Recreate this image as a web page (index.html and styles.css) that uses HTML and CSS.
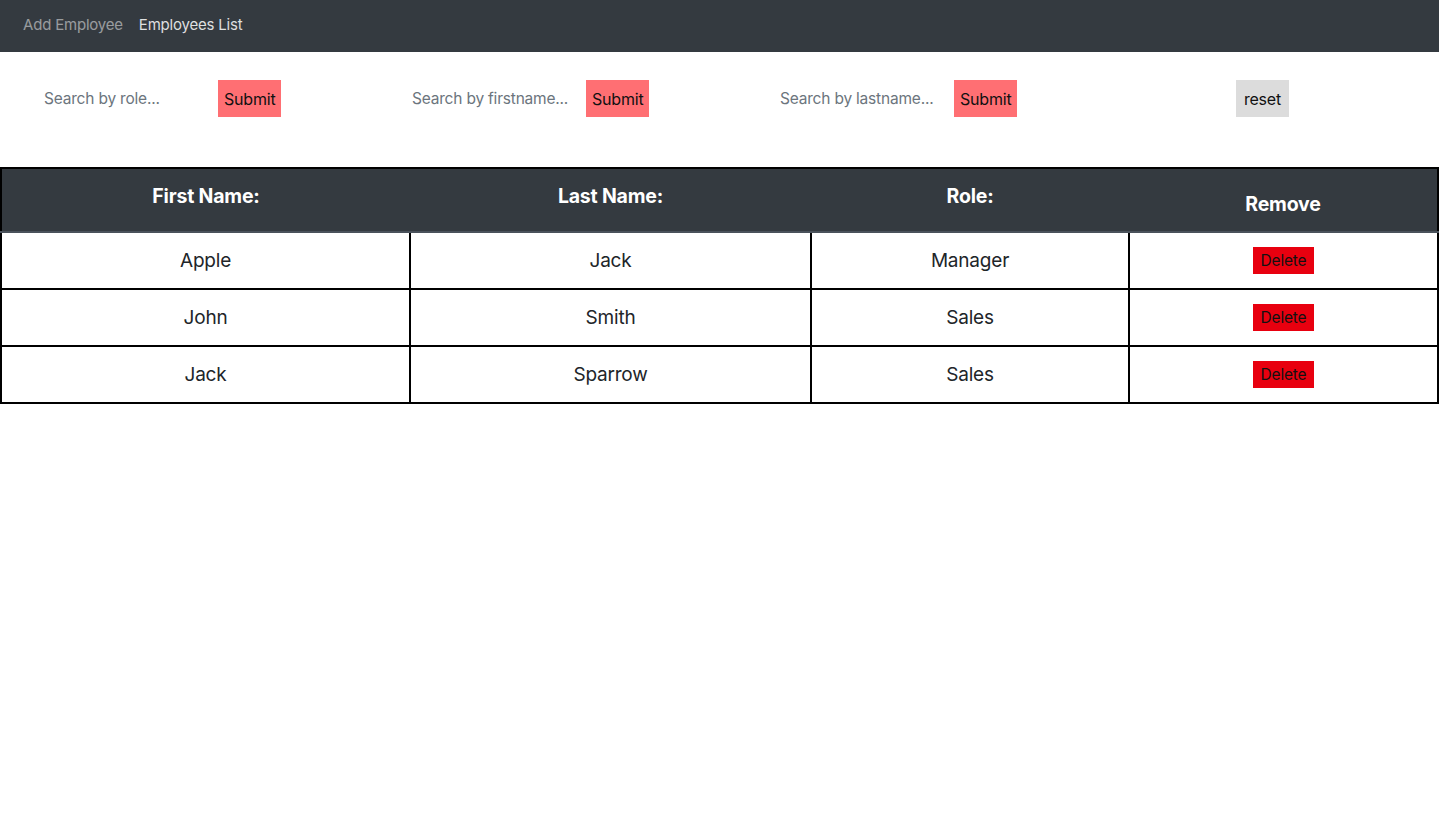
FILE: index.html
```html
<!DOCTYPE html>
<html>
<head>
<meta charset="utf-8">
<title>Employees List</title>
<link rel="stylesheet" href="styles.css">
</head>
<body>
<nav class="navbar">
  <a class="nav-link" href="#">Add Employee</a>
  <a class="nav-link active" href="#">Employees List</a>
</nav>
<div class="search-row">
  <form class="search-group">
    <input class="search-input" type="text" placeholder="Search by role...">
    <button class="btn-submit" type="button">Submit</button>
  </form>
  <form class="search-group">
    <input class="search-input" type="text" placeholder="Search by firstname...">
    <button class="btn-submit" type="button">Submit</button>
  </form>
  <form class="search-group">
    <input class="search-input" type="text" placeholder="Search by lastname...">
    <button class="btn-submit" type="button">Submit</button>
  </form>
  <button class="btn-reset" type="button">reset</button>
</div>
<table class="emp-table">
  <thead>
    <tr>
      <th class="col1">First Name:</th>
      <th class="col2">Last Name:</th>
      <th class="col3">Role:</th>
      <th class="col4 th-remove">Remove</th>
    </tr>
  </thead>
  <tbody>
    <tr><td>Apple</td><td>Jack</td><td>Manager</td><td><button class="btn-delete" type="button">Delete</button></td></tr>
    <tr><td>John</td><td>Smith</td><td>Sales</td><td><button class="btn-delete" type="button">Delete</button></td></tr>
    <tr><td>Jack</td><td>Sparrow</td><td>Sales</td><td><button class="btn-delete" type="button">Delete</button></td></tr>
  </tbody>
</table>
</body>
</html>
```
FILE: styles.css
```css
* { box-sizing: border-box; }
body {
  margin: 0;
  font-family: Inter, "Liberation Sans", Arial, sans-serif;
  color: #212529;
  background: #fff;
}
.navbar {
  height: 52px;
  background: #343a40;
  display: flex;
  align-items: center;
  padding: 0 15px 4px;
}
.nav-link {
  padding: 0 8px;
  font-size: 15px;
  text-decoration: none;
  color: rgba(255,255,255,0.5);
  letter-spacing: -0.2px;
}
.nav-link.active { color: rgba(255,255,255,0.85); }
.search-row {
  display: flex;
  padding: 28px 0 0 32px;
  height: 115px;
  align-items: flex-start;
}
.search-group {
  display: flex;
  margin: 0 119px 0 0;
}
.search-input {
  width: 186px;
  height: 37px;
  border: none;
  outline: none;
  padding: 0 0 0 12px;
  font-family: inherit;
  font-size: 15.5px;
  letter-spacing: -0.2px;
  background: transparent;
}
.search-input::placeholder { color: #6c757d; }
.btn-submit, .btn-reset {
  height: 37px;
  border: none;
  font-family: inherit;
  font-size: 16px;
  color: #111;
  padding: 0 6px;
  letter-spacing: -0.2px;
}
.btn-submit { width: 63px; background: #ff6f73; }
.btn-reset { width: 53px; background: #dcdcdc; margin-left: 100px; }
.emp-table {
  width: 100%;
  border-collapse: collapse;
  border: 2px solid #000;
}
.emp-table th {
  background: #343a40;
  color: #fff;
  font-size: 19.5px;
  font-weight: 700;
  height: 64px;
  padding: 0 0 9px;
  border-bottom: 2px solid #4a525b;
  letter-spacing: -0.2px;
}
.emp-table th.th-remove { padding: 7px 0 0; }
.col1 { width: 409px; }
.col2 { width: 401px; }
.col3 { width: 318px; }
.emp-table td {
  border: 2px solid #000;
  height: 57px;
  text-align: center;
  font-size: 19px;
  letter-spacing: -0.2px;
}
.btn-delete {
  background: #e8000f;
  border: none;
  font-family: inherit;
  font-size: 15.5px;
  color: #111;
  width: 61px;
  height: 27px;
  padding: 0;
  letter-spacing: -0.2px;
}
```
